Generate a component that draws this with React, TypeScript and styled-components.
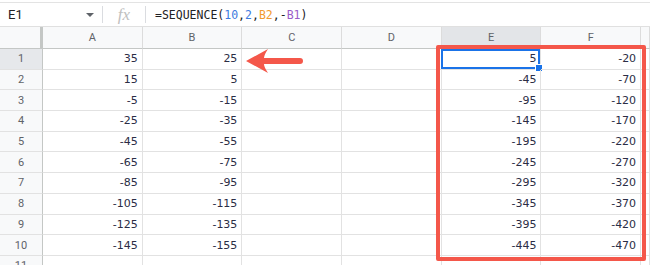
import React from "react";
import styled, { createGlobalStyle } from "styled-components";

const GlobalStyle = createGlobalStyle`
  body {
    margin: 0;
    background: #ffffff;
  }
`;

const colA = [35, 15, -5, -25, -45, -65, -85, -105, -125, -145];
const colB = [25, 5, -15, -35, -55, -75, -95, -115, -135, -155];
const colE = [5, -45, -95, -145, -195, -245, -295, -345, -395, -445];
const colF = [-20, -70, -120, -170, -220, -270, -320, -370, -420, -470];
const letters = ["A", "B", "C", "D", "E", "F", ""];

const App = () => {
  return (
    <Page>
      <GlobalStyle />
      <FormulaBar>
        <NameBox>
          <span>E1</span>
          <Caret />
        </NameBox>
        <Divider />
        <Fx>fx</Fx>
        <Divider />
        <Formula>
          =SEQUENCE(<Tok tone="#3d7be0">10</Tok>,<Tok tone="#3d7be0">2</Tok>,
          <Tok tone="#f29a2e">B2</Tok>,-<Tok tone="#9a5cc8">B1</Tok>)
        </Formula>
      </FormulaBar>

      <Sheet>
        <Corner />
        {letters.map((l, i) => (
          <ColHead key={i} active={l === "E"}>
            {l}
          </ColHead>
        ))}

        {colA.map((a, r) => (
          <React.Fragment key={r}>
            <RowHead active={r === 0}>{r + 1}</RowHead>
            <Cell>{a}</Cell>
            <Cell>{colB[r]}</Cell>
            <Cell />
            <Cell />
            <Cell>
              {colE[r]}
              {r === 0 && (
                <Selection>
                  <Handle />
                </Selection>
              )}
            </Cell>
            <Cell>{colF[r]}</Cell>
            <Cell />
          </React.Fragment>
        ))}

        <RowHead>11</RowHead>
        {letters.map((_, i) => (
          <Cell key={i} />
        ))}
      </Sheet>

      <Highlight />
      <Arrow width="66" height="34" viewBox="0 0 66 34">
        <path
          d="M5 17 L27 5 Q23 11 23 14 L59 14 A3 3 0 0 1 59 20 L23 20 Q23 23 27 29 Z"
          fill="#f4574a"
        />
      </Arrow>
    </Page>
  );
};

export default App;

const Page = styled.div`
  position: relative;
  width: 650px;
  height: 265px;
  overflow: hidden;
  background: #ffffff;
`;

const FormulaBar = styled.div`
  display: flex;
  align-items: center;
  height: 23px;
  margin-top: 2px;
  border-top: 1px solid #e3e3e3;
  border-bottom: 1px solid #e0e0e0;
`;

const NameBox = styled.div`
  display: flex;
  align-items: center;
  justify-content: space-between;
  box-sizing: border-box;
  width: 102px;
  padding: 0 8px 0 8px;
  font-family: Roboto, "Liberation Sans", sans-serif;
  font-size: 13px;
  color: #202124;
`;

const Caret = styled.span`
  width: 0;
  height: 0;
  border-left: 4px solid transparent;
  border-right: 4px solid transparent;
  border-top: 4px solid #5f6368;
`;

const Divider = styled.div`
  width: 1px;
  height: 17px;
  background: #dadce0;
`;

const Fx = styled.div`
  width: 42px;
  text-align: center;
  font-family: "Liberation Serif", serif;
  font-style: italic;
  font-size: 17px;
  color: #c0c0c0;
  line-height: 1;
`;

const Formula = styled.div`
  padding-left: 9px;
  font-family: "DejaVu Sans Mono", "Liberation Mono", monospace;
  font-size: 11.5px;
  color: #202124;
  white-space: pre;
`;

const Tok = styled.span<{ tone: string }>`
  color: ${(p) => p.tone};
`;

const Sheet = styled.div`
  display: grid;
  grid-template-columns: 43px repeat(6, 99.7px) 1fr;
  grid-template-rows: 22px repeat(11, 20.7px);
  font-family: Roboto, "Liberation Sans", sans-serif;
`;

const Corner = styled.div`
  box-sizing: border-box;
  background: #f8f9fa;
  border-right: 3px solid #c4c7c5;
  border-bottom: 1px solid #c4c7c5;
`;

const ColHead = styled.div<{ active?: boolean }>`
  display: flex;
  align-items: center;
  justify-content: center;
  box-sizing: border-box;
  background: ${(p) => (p.active ? "#e3e5e8" : "#f8f9fa")};
  border-right: 1px solid #dcdcdc;
  border-bottom: 1px solid #c4c7c5;
  font-size: 11px;
  color: #5f6368;
`;

const RowHead = styled.div<{ active?: boolean }>`
  display: flex;
  align-items: center;
  justify-content: center;
  box-sizing: border-box;
  background: ${(p) => (p.active ? "#e6e8eb" : "#f8f9fa")};
  border-right: 1px solid #c4c7c5;
  border-bottom: 1px solid #e2e2e2;
  font-size: 11px;
  color: #5f6368;
`;

const Cell = styled.div`
  position: relative;
  display: flex;
  align-items: center;
  justify-content: flex-end;
  box-sizing: border-box;
  padding-right: 4px;
  border-right: 1px solid #e2e2e2;
  border-bottom: 1px solid #e2e2e2;
  font-family: "DejaVu Sans", Verdana, sans-serif;
  font-size: 11px;
  color: #2b2d45;
`;

const Selection = styled.div`
  position: absolute;
  top: 0;
  left: -1px;
  right: 0;
  bottom: 0;
  border: 2px solid #1a73e8;
`;

const Handle = styled.div`
  position: absolute;
  right: -5px;
  bottom: -5px;
  width: 6px;
  height: 6px;
  background: #1a73e8;
  border: 1px solid #ffffff;
`;

const Highlight = styled.div`
  position: absolute;
  left: 436px;
  top: 45px;
  width: 210px;
  height: 216px;
  box-sizing: border-box;
  border: 4px solid #f4574a;
  border-radius: 2px;
  pointer-events: none;
`;

const Arrow = styled.svg`
  position: absolute;
  left: 241px;
  top: 44px;
`;
